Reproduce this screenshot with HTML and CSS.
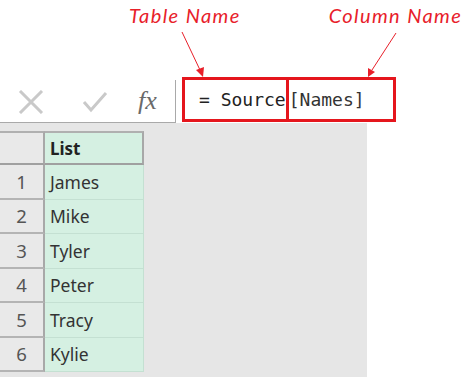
FILE: index.html
```html
<!DOCTYPE html>
<html lang="en">
<head>
    <meta charset="UTF-8">
    <title>Source[Names]</title>
    <link rel="stylesheet" href="styles.css">
</head>
<body>
    <div class="page">
        <div class="notes">
            <span class="note note-table">Table Name</span>
            <span class="note note-column">Column Name</span>
        </div>

        <!-- arrows from the notes down to the formula box -->
        <svg class="arrows" width="474" height="80" viewBox="0 0 474 80">
            <line x1="182" y1="32" x2="200" y2="70" stroke="#e8202a" stroke-width="1"/>
            <polygon points="203,77 196,70 204,67" fill="#e8202a"/>
            <line x1="396" y1="33" x2="372" y2="70" stroke="#e8202a" stroke-width="1"/>
            <polygon points="368,77 368,68 375,72" fill="#e8202a"/>
        </svg>

        <div class="formula-bar">
            <div class="buttons">
                <svg class="btn" width="26" height="24" viewBox="0 0 26 24">
                    <path d="M2 1 L24 23 M24 1 L2 23" stroke="#c9c9c9" stroke-width="3" fill="none"/>
                </svg>
                <svg class="btn" width="26" height="24" viewBox="0 0 26 24">
                    <path d="M2 12 L9 20 L24 3" stroke="#c9c9c9" stroke-width="3" fill="none"/>
                </svg>
                <span class="fx">fx</span>
            </div>
            <div class="formula">
                <span class="part-table">= Source</span><span class="part-column">[Names]</span>
            </div>
        </div>

        <div class="grid-area">
            <div class="grid">
                <div class="cell head num"></div>
                <div class="cell head name">List</div>

                <div class="cell num">1</div>
                <div class="cell name">James</div>
                <div class="cell num">2</div>
                <div class="cell name">Mike</div>
                <div class="cell num">3</div>
                <div class="cell name">Tyler</div>
                <div class="cell num">4</div>
                <div class="cell name">Peter</div>
                <div class="cell num">5</div>
                <div class="cell name">Tracy</div>
                <div class="cell num">6</div>
                <div class="cell name">Kylie</div>
            </div>
        </div>
    </div>
</body>
</html>
```

FILE: styles.css
```css
body {
    margin: 0;
    padding: 0;
    background-color: #fff;
    font-family: 'Noto Sans', 'Open Sans', sans-serif;
}

.page {
    position: relative;
    width: 474px;
    height: 377px;
    overflow: hidden;
}

/* red hand-written notes */
.notes {
    display: flex;
    height: 77px;
    padding-left: 129px;
    box-sizing: border-box;
}

.note {
    color: #e8202a;
    font-family: 'Lato', sans-serif;
    font-style: italic;
    font-size: 20px;
    letter-spacing: 1.4px;
    line-height: 30px;
}

.note-column {
    margin-left: 88px;
}

.arrows {
    position: absolute;
    top: 0;
    left: 0;
}

/* formula bar */
.formula-bar {
    display: flex;
    height: 46px;
}

.buttons {
    display: flex;
    align-items: center;
    width: 176px;
    margin-top: 3px;
    padding-left: 18px;
    box-sizing: border-box;
    border-right: 1px solid #a9a9a9;
    border-bottom: 1px solid #a9a9a9;
}

.btn {
    margin-right: 38px;
    margin-top: 2px;
}

.fx {
    font-family: 'Liberation Serif', serif;
    font-style: italic;
    font-size: 26px;
    color: #6a6a6a;
    margin-left: -8px;
}

.formula {
    display: flex;
    align-items: stretch;
    width: 214px;
    height: 45px;
    margin-left: 6px;
    box-sizing: border-box;
    border: 3px solid #e5161d;
    font-family: 'DejaVu Sans Mono', monospace;
    font-size: 18px;
    color: #222;
}

.part-table {
    display: flex;
    align-items: center;
    padding-left: 14px;
    border-right: 3px solid #e5161d;
    white-space: pre;
}

.part-column {
    display: flex;
    align-items: center;
    color: #333;
}

/* preview grid */
.grid-area {
    width: 367px;
    height: 254px;
    background-color: #e6e6e6;
    padding-top: 8px;
    box-sizing: border-box;
}

.grid {
    display: grid;
    grid-template-columns: 45px 99px;
    grid-template-rows: 34px repeat(6, 34.5px);
    width: 144px;
}

.cell {
    display: flex;
    align-items: center;
    box-sizing: border-box;
    font-size: 17.5px;
}

.num {
    justify-content: center;
    background-color: #e9e9e9;
    border-right: 2px solid #a8a8a8;
    border-bottom: 2px solid #b4b4b4;
    color: #555;
    font-size: 18.5px;
}

.name {
    padding-left: 5px;
    background-color: #d5f0e2;
    border-bottom: 1px solid #c4e0d2;
    border-right: 1px solid #c4e0d2;
    color: #333;
}

.head {
    border-top: 2px solid #b0b0b0;
    border-bottom: 2px solid #a0a0a0;
}

.head.name {
    font-weight: bold;
    font-size: 17px;
    border-right: 2px solid #a8a8a8;
    color: #222;
}
```
